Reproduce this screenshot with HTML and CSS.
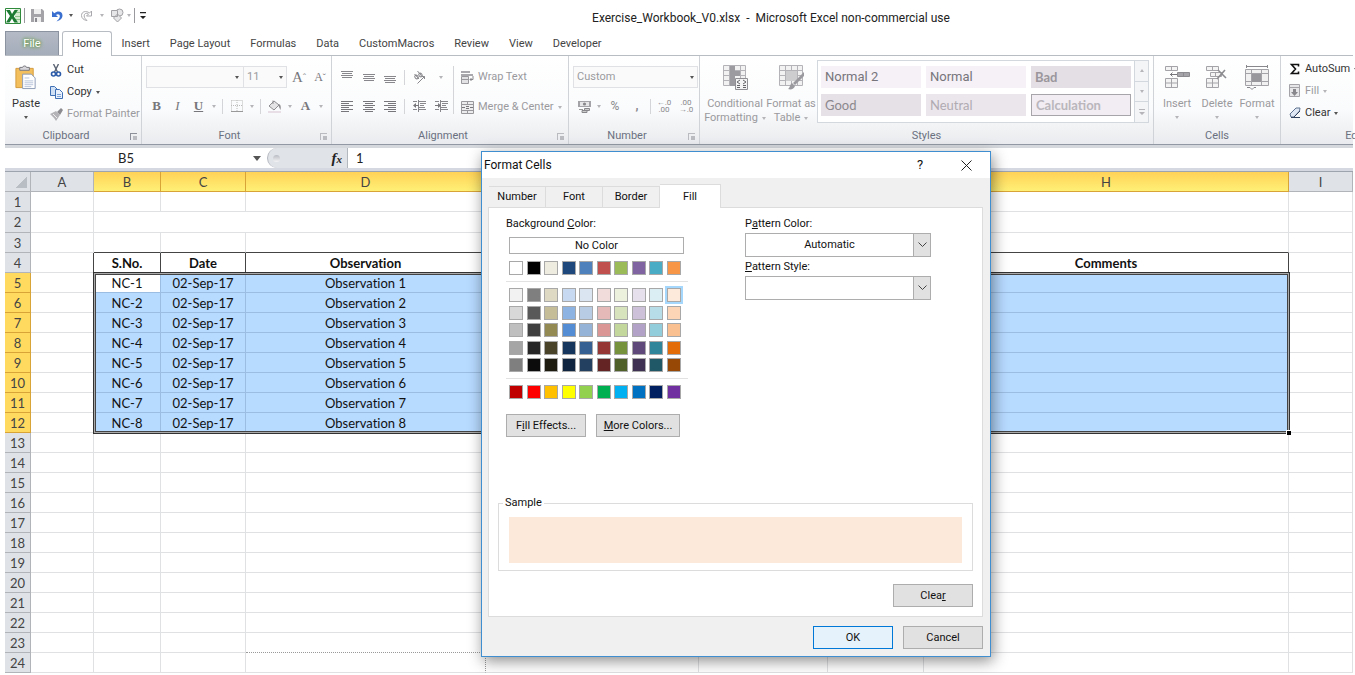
FILE: index.html
```html
<!DOCTYPE html>
<html lang="en">
<head>
  <meta charset="UTF-8">
  <meta name="viewport" content="width=device-width, initial-scale=1.0">
  <title>Exercise_Workbook_V0.xlsx - Microsoft Excel</title>
  <link rel="stylesheet" href="styles.css">
</head>
<body>
  <div class="app">
    <header class="titlebar">
      <div class="quick-access">
        <svg class="logo" width="16" height="18" viewBox="0 0 16 18"><path fill="#fff" stroke="#2f8a3c" d="M.5 1.500h15v15H.5z"/><path fill="#d5ecd3" d="M10 2h5v14h-5z"/><path stroke="#8cc48c" d="M10 5.500h5M10 9.500h5M10 12.500h5"/><path fill="#1d7a33" d="M1 3h4l2 4 2.500-4H13L8.800 9.200 13 15.500H9.200L7 11.500 4.500 15.500H1L5 9z"/></svg>
        <span class="sep"></span>
        <button class="tool save" aria-label="Save"><svg width="13" height="13" viewBox="0 0 13 13"><path fill="#a4a4a8" d="M0 0h11l2 2v11H0z"/><path fill="#eee" d="M3 0h7v5H3zM3 8h7v5H3z"/><path fill="#8a8a90" d="M4 9h2v4H4z"/></svg></button>
        <button class="tool" aria-label="Undo"><svg width="11" height="13" viewBox="0 0 11 13"><path fill="#3a6fd0" d="M0 2v6h6L4 6c2-1.500 4-.5 3.800 1.500C7.700 9.500 6 11 4.500 12.500 8 11.500 10.500 9.500 10.500 6.500 10.500 2.500 6 1.300 2.300 4.200z"/></svg></button>
        <i class="caret dark"></i>
        <button class="tool redo" aria-label="Redo"><svg width="11" height="13" viewBox="0 0 11 13"><path fill="none" stroke="#a9a9ad" d="M10.500 2v5h-5l2-2C5.500 3.500 3 4.500 3.200 7c.1 2 1.300 3 2.800 4.500C2.500 11 .5 9 .5 6.500.5 2.500 5 1.300 8.500 4z"/></svg></button>
        <i class="caret"></i>
        <button class="tool shapes" aria-label="Shapes"><svg width="14" height="15" viewBox="0 0 14 15"><g fill="#e6e6e8" stroke="#a2a2a6"><circle cx="9.500" cy="4.500" r="3.500"/><path d="M1.500 2.500h6v6h-6zM7.500 6l4 4-4 4-4-4z"/></g></svg></button>
        <i class="caret"></i>
        <span class="sep"></span>
        <button class="tool more" aria-label="Customize"><svg width="6" height="8" viewBox="0 0 6 8"><path fill="#222" d="M0 0h6v1.200H0zM0 4h6L3 7z"/></svg></button>
      </div>
      <h1>Exercise_Workbook_V0.xlsx&nbsp; -&nbsp; Microsoft Excel non-commercial use</h1>
    </header>

    <nav class="tabs">
      <button class="file">File</button>
      <button class="current">Home</button>
      <button>Insert</button>
      <button>Page Layout</button>
      <button>Formulas</button>
      <button>Data</button>
      <button>CustomMacros</button>
      <button>Review</button>
      <button>View</button>
      <button>Developer</button>
    </nav>

    <div class="ribbon">
      <section class="group clipboard">
        <div class="tools">
          <button class="big live">
            <svg width="22" height="26" viewBox="0 0 22 26"><path fill="#f3bf5c" stroke="#d39a3c" d="M.5 3.500h18v20H.5z"/><path fill="#d8d8dc" stroke="#77777d" d="M4.500 2.500h3c0-2 4-2 4 0h3v3h-10z"/><path fill="#fff" stroke="#8b9bb5" d="M7.500 9.500h9l4 4v11h-13z"/><path stroke="#b6c4d8" d="M9.500 13.500h5M9.500 16.500h9M9.500 18.500h9M9.500 20.500h9M9.500 22.500h7"/></svg>
            <span>Paste</span><i class="caret dark"></i>
          </button>
          <div class="small-list">
            <button class="small live"><svg width="13" height="13" viewBox="0 0 13 13"><path fill="none" stroke="#5b6473" stroke-width="1.400" d="M3.500 0l4 8M8.500 0l-4 8"/><g fill="none" stroke="#2b5ba8" stroke-width="1.600"><circle cx="3.500" cy="10" r="2"/><circle cx="8.500" cy="10" r="2"/></g></svg>Cut</button>
            <button class="small live"><svg width="13" height="13" viewBox="0 0 13 13"><path fill="#cfe0f5" stroke="#3f6fb5" d="M.5.5h4l3 3v6h-7z"/><path fill="#e8f1fc" stroke="#3f6fb5" d="M5.500 3.500h4l3 3v6h-7z"/><path stroke="#7ea4d8" d="M7 8.500h4M7 10.500h4"/></svg>Copy<i class="caret dark"></i></button>
            <button class="small"><svg width="13" height="13" viewBox="0 0 13 13"><path fill="#8c8c90" d="M7 4l4-4 2 2-3 5z"/><path fill="#b4b4b8" d="M0 6l6-3 4 4-4 6-2-3z"/><path stroke="#eee" d="M3 6l4 4"/></svg>Format Painter</button>
          </div>
        </div>
        <h2>Clipboard<span class="launch live"></span></h2>
      </section>

      <section class="group font">
        <div class="tools column">
          <div class="line">
            <span class="drop"><select class="family" aria-label="Font"><option></option></select><i class="caret dark"></i></span>
            <span class="drop"><select class="size" aria-label="Font size"><option>11</option></select><i class="caret dark"></i></span>
            <button class="tool serif grow" aria-label="Grow font">A<sup>&#710;</sup></button>
            <button class="tool serif shrink" aria-label="Shrink font">A<sup>&#711;</sup></button>
          </div>
          <div class="line letters">
            <button class="tool serif bold">B</button>
            <button class="tool serif italic">I</button>
            <button class="tool serif under">U</button><i class="caret"></i>
            <span class="sep"></span>
            <button class="tool" aria-label="Borders"><svg width="12" height="12" viewBox="0 0 12 12"><path fill="none" stroke="#bbb" stroke-dasharray="1 1" d="M.5.5h11v11M.5.5v11M6 0v11M0 5.500h12"/><path stroke="#999" d="M0 11.500h12"/></svg></button><i class="caret"></i>
            <span class="sep"></span>
            <button class="tool" aria-label="Fill color"><svg width="14" height="13" viewBox="0 0 14 13"><path fill="#e4e4e6" stroke="#8e8e92" d="M1 6l5-5 5 4-5 5z"/><path fill="none" stroke="#8e8e92" d="M5 4V.5"/><path fill="#8e8e92" d="M10 4c3 0 3 3 2.500 6L11 7z"/><path fill="#e8dfe6" d="M0 11h13v2H0z"/></svg></button><i class="caret"></i>
            <button class="tool serif color">A</button><i class="caret"></i>
          </div>
        </div>
        <h2>Font<span class="launch"></span></h2>
      </section>

      <section class="group alignment">
        <div class="tools">
          <div class="align-grid">
            <button class="tool" aria-label="Top align"><svg width="12" height="12" viewBox="0 0 12 12"><path stroke="#88888c" d="M0 .5h12M1 2.500h10M0 4.500h12M1 6.500h10"/></svg></button>
            <button class="tool" aria-label="Middle align"><svg width="12" height="12" viewBox="0 0 12 12"><path stroke="#88888c" d="M0 3.500h12M1 5.500h10M0 7.500h12M1 9.500h10"/></svg></button>
            <button class="tool" aria-label="Bottom align"><svg width="12" height="12" viewBox="0 0 12 12"><path stroke="#88888c" d="M0 5.500h12M1 7.500h10M0 9.500h12M1 11.500h10"/></svg></button>
            <span class="sep"></span>
            <button class="tool" aria-label="Orientation"><svg width="13" height="13" viewBox="0 0 13 13"><g fill="none" stroke="#88888c"><ellipse cx="3.500" cy="6" rx="2" ry="1.500" transform="rotate(45 3.500 6)"/><ellipse cx="7.500" cy="4" rx="2" ry="1.500" transform="rotate(45 7.500 4)"/><path d="M1.500 3l4.500 5M4.500 0l4.500 5.500M4.500 12.500l7-7M9 5.500h2.500V8"/></g></svg></button>
            <i class="caret"></i>
            <button class="tool" aria-label="Align left"><svg width="12" height="12" viewBox="0 0 12 12"><path stroke="#77777b" d="M0 1.500h12M0 3.500h8M0 5.500h12M0 7.500h8M0 9.500h12M0 11.500h8"/></svg></button>
            <button class="tool" aria-label="Center"><svg width="12" height="12" viewBox="0 0 12 12"><path stroke="#77777b" d="M0 1.500h12M2 3.500h8M0 5.500h12M2 7.500h8M0 9.500h12M2 11.500h8"/></svg></button>
            <button class="tool" aria-label="Align right"><svg width="12" height="12" viewBox="0 0 12 12"><path stroke="#77777b" d="M0 1.500h12M4 3.500h8M0 5.500h12M4 7.500h8M0 9.500h12M4 11.500h8"/></svg></button>
            <span class="sep"></span>
            <button class="tool" aria-label="Decrease indent"><svg width="13" height="12" viewBox="0 0 13 12"><path stroke="#88888c" d="M0 1.500h4M6 1.500h7M7 3.500h6M7 5.500h4M0 9.500h4M6 7.500h6M6 9.500h7M5.500 0v12"/><path fill="#77777b" d="M0 5.500L3 3v2h3v1H3v2z"/></svg></button>
            <button class="tool" aria-label="Increase indent"><svg width="13" height="12" viewBox="0 0 13 12"><path stroke="#88888c" d="M0 1.500h4M6 1.500h7M7 3.500h6M7 5.500h4M0 9.500h4M6 7.500h6M6 9.500h7M5.500 0v12"/><path fill="#77777b" d="M6 5.500L3 3v2H0v1h3v2z"/></svg></button>
          </div>
          <span class="sep tall"></span>
          <div class="small-list two">
            <button class="small"><svg width="13" height="13" viewBox="0 0 13 13"><path fill="#a9a9ad" d="M0 0h9v2H0zM0 3h12v2H0z"/><path fill="#e2e2e4" stroke="#99999d" d="M.5 5.500h7v7h-7zM.5 8.500h7"/><path fill="none" stroke="#88888c" d="M12 5v3.500H9M10.500 7L9 8.500l1.500 1.500"/></svg>Wrap Text</button>
            <button class="small"><svg width="13" height="13" viewBox="0 0 13 13"><path fill="#ececee" stroke="#99999d" d="M.5.5h12v12H.5zM6.500.5v3M6.500 9.500v3M.5 3.500h12M.5 9.500h12"/><path stroke="#77777b" d="M1 6.500h3M9 6.500h3M5 5.500h3M5 7.500h3"/></svg>Merge &amp; Center<i class="caret"></i></button>
          </div>
        </div>
        <h2>Alignment<span class="launch"></span></h2>
      </section>

      <section class="group number">
        <div class="tools column">
          <div class="line">
            <span class="drop wide"><select aria-label="Number format"><option>Custom</option></select><i class="caret dark"></i></span>
          </div>
          <div class="line formats">
            <button class="tool money" aria-label="Accounting format"><svg width="13" height="13" viewBox="0 0 13 13"><path fill="#a4a4a8" d="M0 1h13v6H0z"/><path fill="#e6e6e8" d="M2 2h9v4H2z"/><circle cx="6.500" cy="4" r="1.600" fill="#88888c"/><path fill="#ccc" stroke="#88888c" d="M6.500 8.500h5v2h-5zM4 10.500h5v2H4z"/><path stroke="#999" d="M1 9.500h4"/></svg></button><i class="caret"></i>
            <button class="tool">%</button>
            <button class="tool comma">,</button>
            <span class="sep"></span>
            <button class="tool decimals" aria-label="Increase decimal"><span>&larr;.0</span><span>.00</span></button>
            <button class="tool decimals" aria-label="Decrease decimal"><span>.00</span><span>&rarr;.0</span></button>
          </div>
        </div>
        <h2>Number<span class="launch"></span></h2>
      </section>

      <section class="group styles">
        <div class="tools">
          <button class="big cond">
            <svg width="25" height="25" viewBox="0 0 25 25"><path fill="#f2f2f3" stroke="#b4b4b8" d="M.5.5h22v20H.5zM.5 5.500h22M.5 10.500h22M.5 15.500h22M6.500.5v20M17.500.5v20"/><path fill="#9c9ca0" d="M7 1h5v20H7zM12 6h5v5h-5z"/><path fill="#f4f4f5" stroke="#909094" d="M12.500 13.500h12v11h-12z"/><path fill="none" stroke="#66666a" d="M17 15l-3 2 3 2M14 20.500h3M14 22.500h3M20 15l3 2-3 2M20 20.500h3M20 22.500h3"/></svg>
            <span>Conditional<br>Formatting<i class="caret"></i></span>
          </button>
          <button class="big astable">
            <svg width="25" height="25" viewBox="0 0 25 25"><path fill="#f2f2f3" stroke="#b4b4b8" d="M.5.5h23v20H.5zM.5 5.500h23M.5 10.500h23M.5 15.500h23M6.500.5v20M12.500.5v20M18.500.5v20"/><path fill="#cdcdd0" d="M7 6h11v10H7z"/><path fill="#9a9a9e" d="M23 9l2-2v4l-9 9-2-2zM13 18l3 3c-1 3-4 4-7 3 2-1 2-5 4-6z"/></svg>
            <span>Format as<br>Table<i class="caret"></i></span>
          </button>
          <div class="gallery">
            <div class="cells">
              <button>Normal 2</button>
              <button>Normal</button>
              <button class="bad">Bad</button>
              <button class="good">Good</button>
              <button class="neutral">Neutral</button>
              <button class="calculation">Calculation</button>
            </div>
            <div class="scroll">
              <button aria-label="Up"><i class="caret up"></i></button>
              <button aria-label="Down"><i class="caret"></i></button>
              <button aria-label="More"><svg width="6" height="6" viewBox="0 0 6 6"><path fill="#b5b5b9" d="M0 0h6v1H0zM0 3h6L3 6z"/></svg></button>
            </div>
          </div>
        </div>
        <h2>Styles</h2>
      </section>

      <section class="group cells-group">
        <div class="tools">
          <button class="big"><svg width="25" height="25" viewBox="0 0 25 25"><path fill="#f4f4f5" stroke="#a4a4a8" d="M.5 1.500h12v4H.5zM6.500 1.500v4M.5 13.500h12v9H.5zM6.500 13.500v9M.5 18h12"/><path fill="#a4a4a8" stroke="#8c8c90" d="M12.500 7.500h12v4h-12zM18.500 7.500v4"/><path fill="none" stroke="#77777b" d="M12 9.500H5M7.500 7.500l-2 2 2 2"/></svg><span>Insert</span><i class="caret"></i></button>
          <button class="big"><svg width="22" height="25" viewBox="0 0 22 25"><path fill="#f4f4f5" stroke="#a4a4a8" d="M.5 1.500h12v4H.5zM6.500 1.500v4M4.500 7.500h11v4h-11zM9.500 7.500v4M.5 13.500h12v9H.5zM6.500 13.500v9M.5 18h12"/><path stroke="#8c8c90" stroke-width="1.600" d="M12 5l8 8M19 5l-8 9"/></svg><span>Delete</span><i class="caret"></i></button>
          <button class="big"><svg width="25" height="25" viewBox="0 0 25 25"><path fill="#f1f1f2" stroke="#a4a4a8" d="M.5 4.500h23v16H.5zM.5 8.500h23M.5 16.500h23M6.500 4.500v16M16.500 4.500v16"/><path fill="#98989c" d="M7 9h9v8H7z"/><path fill="none" stroke="#88888c" d="M1 1.500h22M1.500 0v3M22.500 0v3M2 22.500h3l2 2 2-2h2"/></svg><span>Format</span><i class="caret"></i></button>
        </div>
        <h2>Cells</h2>
      </section>

      <section class="group editing">
        <div class="tools">
          <div class="small-list">
            <button class="small live"><svg width="12" height="12" viewBox="0 0 12 12"><path fill="none" stroke="#111" stroke-width="1.600" d="M9.500 3.500V1.500H2.500L6.500 6l-4 4.500h7v-2"/></svg>AutoSum<i class="caret dark"></i></button>
            <button class="small"><svg width="12" height="14" viewBox="0 0 12 14"><path fill="#e6e6e8" stroke="#a4a4a8" d="M.5.5h10v12H.5zM.5 3.500h10"/><path fill="#88888c" d="M4 5h3v3h2l-3.500 4L2 8h2z"/></svg>Fill<i class="caret"></i></button>
            <button class="small live"><svg width="12" height="12" viewBox="0 0 12 12"><path fill="#dfe8f4" stroke="#5f7290" d="M1 7l6-6h4L10.500 4 5 10H2z"/><path stroke="#31435f" d="M2 10.500h9M5 10l6-6"/></svg>Clear<i class="caret dark"></i></button>
          </div>
        </div>
        <h2>Editing</h2>
      </section>
    </div>

    <div class="formula-bar">
      <input class="name-box" aria-label="Name box" value="B5">
      <i class="caret dark"></i>
      <div class="capsule"><span class="knob"></span><span class="fx">f<small>x</small></span></div>
      <input class="formula" aria-label="Formula" value="1">
    </div>

    <main class="sheet">
      <table>
        <colgroup>
          <col class="col-head"><col class="col-a"><col class="col-b"><col class="col-c"><col class="col-d"><col class="col-e"><col class="col-f"><col class="col-g"><col class="col-h"><col class="col-i">
        </colgroup>
        <thead>
          <tr>
            <th class="corner"></th><th>A</th><th class="on">B</th><th class="on">C</th><th class="on">D</th><th class="on">E</th><th class="on">F</th><th class="on">G</th><th class="on">H</th><th>I</th>
          </tr>
        </thead>
        <tbody id="rows"></tbody>
      </table>
      <div class="selection"></div>

      <div class="dialog" role="dialog" aria-labelledby="dialog-title">
        <div class="dialog-title">
          <h2 id="dialog-title">Format Cells</h2>
          <button aria-label="Help">?</button>
          <button aria-label="Close"><svg width="11" height="11" viewBox="0 0 11 11"><path stroke="#222" d="M.5.5l10 10M10.500.5l-10 10"/></svg></button>
        </div>
        <div class="dialog-tabs">
          <button>Number</button>
          <button>Font</button>
          <button>Border</button>
          <button class="current">Fill</button>
        </div>
        <div class="panel">
          <div class="columns">
            <div class="background">
              <p class="label">Background <u>C</u>olor:</p>
              <button class="no-color">No Color</button>
              <div class="swatches" data-palette="theme"></div>
              <hr>
              <div class="swatches shades" data-palette="shades"></div>
              <hr>
              <div class="swatches" data-palette="standard"></div>
              <div class="buttons">
                <button class="btn">F<u>i</u>ll Effects...</button>
                <button class="btn"><u>M</u>ore Colors...</button>
              </div>
            </div>
            <div class="pattern">
              <label class="label" for="pattern-color">P<u>a</u>ttern Color:</label>
              <div class="combo">
                <select id="pattern-color"><option>Automatic</option></select>
                <span><svg width="9" height="6" viewBox="0 0 9 6"><path fill="none" stroke="#444" d="M.5.5l4 4 4-4"/></svg></span>
              </div>
              <label class="label" for="pattern-style"><u>P</u>attern Style:</label>
              <div class="combo">
                <select id="pattern-style"><option></option></select>
                <span><svg width="9" height="6" viewBox="0 0 9 6"><path fill="none" stroke="#444" d="M.5.5l4 4 4-4"/></svg></span>
              </div>
            </div>
          </div>
          <fieldset class="sample">
            <legend>Sample</legend>
            <div class="preview"></div>
          </fieldset>
          <button class="btn clear">Clea<u>r</u></button>
        </div>
        <div class="actions">
          <button class="btn primary">OK</button>
          <button class="btn">Cancel</button>
        </div>
      </div>
    </main>
  </div>
  <script src="script.js"></script>
</body>
</html>
```
FILE: styles.css
```css
* {
  box-sizing: border-box;
}

body {
  margin: 0;
  background: #fff;
  font-family: Roboto, "Noto Sans", sans-serif;
  font-size: 11px;
  line-height: 14px;
  color: #444;
}

button,
input,
select {
  margin: 0;
  padding: 0;
  border: none;
  background: none;
  font: inherit;
  color: inherit;
}

h1,
h2,
p {
  margin: 0;
  font-size: inherit;
  font-weight: normal;
}

svg {
  display: block;
  flex: none;
}

.app {
  padding: 0 2px 0 5px;
  overflow: hidden;
}

.caret {
  flex: none;
  width: 0;
  border: 2px solid transparent;
  border-top: 3px solid #b5b5b9;
  border-bottom: none;
}

.caret.dark {
  border-top-color: #555;
}

.caret.up {
  border-top: none;
  border-bottom: 3px solid #b5b5b9;
}

.sep {
  width: 1px;
  height: 15px;
  background: #d3d5d9;
}

.tool {
  display: flex;
  align-items: center;
  justify-content: center;
  color: #88888c;
}

/* title bar */
.titlebar {
  display: flex;
  align-items: center;
  height: 31px;
}

.quick-access {
  display: flex;
  align-items: center;
  width: 148px;
  height: 31px;
}

.quick-access .sep {
  margin-left: 3px;
  background: #9a9a9e;
}

.quick-access .save {
  margin: 0 3px 0 6px;
}

.quick-access .save + .tool {
  margin: 0 6px 0 5px;
}

.quick-access .redo {
  margin: 0 8px;
}

.quick-access .shapes {
  margin: 0 3px 0 6px;
}

.quick-access .more {
  margin-left: 5px;
}

.titlebar h1 {
  flex: 1;
  padding: 5px 0 0 36px;
  text-align: center;
  font-size: 12px;
  line-height: 16px;
  color: #222;
}

/* ribbon tabs */
.tabs {
  display: flex;
  height: 25px;
  border-bottom: 1px solid #b8bcc3;
}

.tabs button {
  height: 25px;
  padding: 0 10px;
}

.tabs .file {
  width: 54px;
  height: 24px;
  margin-right: 3px;
  border: 1px solid #8b93a1;
  border-bottom: none;
  background: linear-gradient(#b4bac6, #a5adba);
  color: #fff;
  text-shadow: 0 0 3px #4f8a2c, 0 0 4px #6fae3e;
}

.tabs .current {
  padding: 0 9px;
  border: 1px solid #b8bcc3;
  border-bottom: none;
  border-radius: 3px 3px 0 0;
  background: #fff;
}

/* ribbon */
.ribbon {
  display: flex;
  height: 89px;
  border-bottom: 1px solid #9299a4;
  background: linear-gradient(#fff, #fafbfc 60%, #e9ebee);
}

.group {
  display: flex;
  flex: none;
  flex-direction: column;
  border-right: 1px solid #d0d3d8;
  white-space: nowrap;
}

.group h2 {
  position: relative;
  height: 17px;
  padding-right: 14px;
  line-height: 18px;
  text-align: center;
  color: #6b7080;
}

.launch {
  position: absolute;
  right: 4px;
  bottom: 4px;
  width: 7px;
  height: 7px;
  border: 1px solid #b9bbc0;
  border-right: none;
  border-bottom: none;
  background: linear-gradient(#b9bbc0, #b9bbc0) right bottom / 4px 4px no-repeat;
}

.launch.live {
  border-color: #8d9098;
}

.tools {
  display: flex;
  flex: 1;
  color: #9a9a9e;
}

.tools .live {
  color: #333;
}

.tools.column {
  flex-direction: column;
  gap: 7px;
  padding-top: 10px;
}

.line {
  display: flex;
  align-items: center;
  height: 22px;
}

.clipboard {
  width: 137px;
}

.font {
  width: 190px;
}

.alignment {
  width: 237px;
}

.number {
  width: 131px;
}

.styles {
  width: 454px;
}

.styles h2,
.cells-group h2 {
  padding-right: 0;
}

.cells-group {
  width: 127px;
}

.editing {
  flex: 1 1 0;
  min-width: 0;
  border-right: none;
}

.editing h2 {
  min-width: 162px;
  padding-right: 0;
}

.big {
  display: flex;
  flex-direction: column;
  align-items: center;
  width: 40px;
  padding-top: 9px;
  line-height: 14px;
}

.big svg {
  height: 25px;
  margin-bottom: 7px;
}

.big span .caret {
  display: inline-block;
  margin-left: 4px;
  vertical-align: middle;
}

.big > .caret {
  margin-top: 5px;
}

.clipboard .tools {
  padding-left: 1px;
}

.small-list {
  display: flex;
  flex-direction: column;
  gap: 8px;
  padding-top: 7px;
}

.clipboard .small-list {
  margin-left: 4px;
}

.small-list.two {
  gap: 16px;
  padding: 14px 0 0 7px;
}

.small {
  display: flex;
  align-items: center;
  gap: 4px;
  height: 14px;
}

.drop {
  position: relative;
}

.drop select {
  appearance: none;
  width: 44px;
  height: 22px;
  padding-left: 3px;
  border: 1px solid #dfe1e5;
  background: #fafafb;
  color: #9a9a9e;
}

.drop .family {
  width: 97px;
  border-right: none;
}

.drop.wide select {
  width: 125px;
}

.drop .caret {
  position: absolute;
  top: 10px;
  right: 4px;
}

.font .line {
  padding-left: 4px;
}

.serif {
  font-family: "Liberation Serif", serif;
  font-size: 13px;
  color: #77777b;
}

.serif sup {
  font-size: 9px;
  line-height: 6px;
}

.grow {
  width: 24px;
  font-size: 15px;
}

.shrink {
  width: 18px;
  font-size: 12px;
}

.letters .tool {
  width: 21px;
}

.letters .color {
  font-weight: bold;
}

.letters .caret,
.letters .sep {
  margin: 0 3px;
}

.bold {
  font-weight: bold;
}

.italic {
  font-style: italic;
}

.under {
  text-decoration: underline;
  font-weight: bold;
}

.align-grid {
  display: grid;
  grid-template-columns: 22px 21px 22px 7px 22px 22px;
  grid-template-rows: 22px 22px;
  row-gap: 7px;
  align-items: center;
  justify-items: center;
  padding: 10px 0 0 4px;
}

.sep.tall {
  height: 48px;
  margin: 10px 0 0 1px;
}

.number .line {
  padding-left: 4px;
}

.formats .tool {
  width: 22px;
  font-size: 12px;
}

.formats .caret {
  margin: 0 3px 0 2px;
}

.formats .comma {
  font-weight: bold;
}

.formats .sep {
  margin: 0 2px;
}

.formats .decimals {
  flex-direction: column;
  font-size: 8px;
  line-height: 7px;
}

.cond {
  width: 62px;
  margin-left: 4px;
}

.astable {
  width: 50px;
}

.gallery {
  display: flex;
  flex: none;
  height: 63px;
  margin: 4px 0 0 1px;
  border: 1px solid #d3d7de;
  background: #fff;
}

.cells {
  display: grid;
  grid-template-columns: repeat(3, 100px);
  gap: 5px;
  padding: 5px 3px;
}

.cells button {
  height: 22px;
  padding-left: 4px;
  background: #f5f1f7;
  text-align: left;
  font-size: 13px;
  color: #77757b;
}

.cells .bad {
  background: #e4dfe4;
  font-family: Lato, sans-serif;
  font-weight: bold;
  color: #9a969c;
}

.cells .good {
  background: #e6e1e6;
  font-family: Lato, sans-serif;
  color: #8c888e;
}

.cells .neutral {
  background: #ebe6ec;
  font-family: Lato, sans-serif;
  color: #b0abb2;
}

.cells .calculation {
  border: 1px solid #a8a5aa;
  background: #f1edf3;
  font-family: Lato, sans-serif;
  font-weight: bold;
  color: #bab6bc;
}

.scroll {
  display: flex;
  flex-direction: column;
  width: 14px;
}

.scroll button {
  display: flex;
  flex: 1;
  align-items: center;
  justify-content: center;
  border-left: 1px solid #d3d7de;
  border-bottom: 1px solid #d3d7de;
  background: #f4f5f7;
}

.scroll button:last-child {
  border-bottom: none;
}

.cells-group .tools {
  padding-left: 3px;
}

.editing .small-list {
  padding: 6px 0 0 8px;
}

/* formula bar */
.formula-bar {
  display: flex;
  align-items: center;
  height: 26px;
  border-top: 3px solid #d5d8dd;
  border-bottom: 3px solid #d5d8e0;
  background: #fff;
  font-family: Lato, sans-serif;
  font-size: 13px;
  color: #222;
}

.name-box {
  width: 242px;
  text-align: center;
}

.formula-bar > .caret {
  margin: 0 6px;
  border-width: 4px;
  border-top-width: 5px;
  border-bottom: none;
}

.capsule {
  display: flex;
  align-items: center;
  justify-content: space-between;
  width: 81px;
  height: 20px;
  padding: 0 5px;
  border: 1px solid #b3b7be;
  border-width: 0 1px;
  border-radius: 10px 0 0 10px;
  background: #e0e3e8;
}

.knob {
  width: 7px;
  height: 7px;
  border-radius: 50%;
  background: linear-gradient(#b8bbc2, #f4f4f6);
}

.fx {
  font-family: "Liberation Serif", serif;
  font-size: 15px;
  font-style: italic;
  font-weight: bold;
}

.fx small {
  font-size: 11px;
}

.formula {
  flex: 1;
  min-width: 0;
  padding-left: 8px;
}

/* worksheet */
.sheet {
  position: relative;
}

.sheet table {
  width: 100%;
  table-layout: fixed;
  border-collapse: separate;
  border-spacing: 0;
  border-top: 1px solid #9ea4ae;
  font-family: Lato, sans-serif;
  font-size: 13px;
  font-variant-ligatures: none;
  line-height: 18px;
  color: #111;
}

.col-head { width: 26px; }
.col-a { width: 63px; }
.col-b { width: 67px; }
.col-c { width: 85px; }
.col-d { width: 240px; }
.col-e { width: 213px; }
.col-f { width: 129px; }
.col-g { width: 96px; }
.col-i { width: 64px; }

.sheet th,
.sheet td {
  height: 20px;
  padding: 0;
  border-right: 1px solid #dfe1e3;
  border-bottom: 1px solid #dfe1e3;
  text-align: center;
  white-space: nowrap;
}

.sheet th {
  background: #dfe3e8;
  border-color: #b1b5ba;
  font-weight: normal;
  color: #444;
}

.sheet th.on {
  background: #ffda5f;
  border-color: #d8a438;
}

.sheet thead th.on {
  background: linear-gradient(#ffd257, #fff076);
}

.sheet .corner {
  background: linear-gradient(135deg, transparent 50%, #b9bdc4 50%) 10px 4px / 12px 12px no-repeat #dfe3e8;
}

.sheet .tall-row td,
.sheet .tall-row th {
  height: 21px;
}

.sheet .before-head td:nth-child(n+3):nth-child(-n+9) {
  border-bottom-color: #444;
}

.sheet .head td {
  font-weight: bold;
}

.sheet .head td:nth-child(n+2):nth-child(-n+9) {
  border-right-color: #444;
}

.sheet .data td:nth-child(n+3):nth-child(-n+9) {
  background-color: #b7daff;
  border-right: 1px solid #9cbde2;
  border-bottom: 1px solid #9cbde2;
}

.sheet .data td.active:nth-child(3) {
  background-color: #fff;
}

.sheet .note-top td:nth-child(5) {
  border-bottom: 1px dotted #999;
}

.sheet .note td:nth-child(5) {
  border-right: 1px dotted #999;
}

.selection {
  position: absolute;
  top: 101px;
  right: 63px;
  left: 88px;
  height: 162px;
  border: 1px solid #333;
  box-shadow: inset 0 0 0 1px #aaa, inset 0 0 0 2px #444;
}

.selection::after {
  content: "";
  position: absolute;
  right: -2px;
  bottom: -2px;
  width: 4px;
  height: 4px;
  border: 1px solid #fff;
  border-width: 1px 0 0 1px;
  background: #000;
}

/* format cells dialog */
.dialog {
  position: absolute;
  top: -20px;
  left: 476px;
  width: 510px;
  padding-bottom: 7px;
  border: 1px solid #3f8fd0;
  background: #f0f0f0;
  box-shadow: 2px 4px 14px rgba(0, 0, 0, 0.45);
  color: #111;
}

.dialog-title {
  display: flex;
  align-items: center;
  height: 26px;
  padding-left: 2px;
  background: #fff;
  font-size: 12px;
}

.dialog-title h2 {
  flex: 1;
}

.dialog-title button {
  display: flex;
  align-items: center;
  justify-content: center;
  width: 46px;
  height: 26px;
  font-size: 13px;
}

.dialog-title button:last-child {
  margin-right: 1px;
}

.dialog-tabs {
  display: flex;
  align-items: flex-end;
  height: 29px;
  padding-left: 7px;
}

.dialog-tabs button {
  width: 57px;
  height: 21px;
  border: 1px solid #dcdcdc;
  border-width: 1px 1px 0 0;
}

.dialog-tabs .current {
  position: relative;
  width: 61px;
  height: 24px;
  margin-bottom: -1px;
  background: #fff;
}

.panel {
  display: flex;
  flex-direction: column;
  margin: 0 7px 0 6px;
  padding: 9px;
  border: 1px solid #dcdcdc;
  background: #fff;
}

.columns {
  display: flex;
  height: 279px;
}

.background {
  width: 182px;
  margin: 0 57px 0 8px;
}

.label {
  display: block;
  height: 16px;
  line-height: 14px;
  white-space: nowrap;
}

.no-color {
  display: block;
  width: 175px;
  height: 17px;
  margin: 4px 0 7px 3px;
  border: 1px solid #adadad;
  background: #fff;
  line-height: 14px;
}

.swatches {
  display: grid;
  grid-template-columns: repeat(10, 14px);
  grid-auto-rows: 14px;
  justify-content: space-between;
  align-content: space-between;
  width: 172px;
  margin-left: 3px;
}

.shades {
  height: 84px;
}

.swatch {
  border: 1px solid #a8a8a8;
}

.swatch.selected {
  outline: 2px solid #a5d6fb;
}

.background hr {
  height: 1px;
  margin: 6px 0;
  border: none;
  background: #e2e2e2;
}

.buttons {
  display: flex;
  gap: 10px;
  margin-top: 15px;
}

.btn {
  flex: none;
  width: 80px;
  height: 23px;
  border: 1px solid #adadad;
  background: #e1e1e1;
  white-space: nowrap;
}

.buttons .btn + .btn {
  width: 84px;
}

.btn.primary {
  border: 1px solid #0078d7;
  background: #e5f1fb;
}

.pattern {
  width: 186px;
}

.combo {
  position: relative;
  margin-bottom: 3px;
}

.combo select {
  appearance: none;
  display: block;
  width: 100%;
  height: 24px;
  padding-right: 17px;
  border: 1px solid #adadad;
  background: #fff;
  text-align-last: center;
}

.combo span {
  position: absolute;
  top: 0;
  right: 0;
  display: flex;
  align-items: center;
  justify-content: center;
  width: 18px;
  height: 24px;
  border: 1px solid #adadad;
  background: #e1e1e1;
  pointer-events: none;
}

.sample {
  margin: 0;
  padding: 7px 10px;
  border: 1px solid #dcdcdc;
}

.sample legend {
  margin-left: -6px;
  padding: 0 2px;
}

.preview {
  height: 46px;
  background: #fde9d9;
}

.clear {
  align-self: flex-end;
  margin-top: 13px;
}

.actions {
  display: flex;
  justify-content: flex-end;
  gap: 10px;
  padding: 9px 7px 0 0;
}
```
FILE: script.js
```js
const palettes = {
  theme: ['#ffffff #000000 #eeece1 #1f497d #4f81bd #c0504d #9bbb59 #8064a2 #4bacc6 #f79646'],
  shades: [
    '#f2f2f2 #7f7f7f #ddd9c3 #c6d9f0 #dbe5f1 #f2dcdb #ebf1dd #e5e0ec #dbeef3 #fdeada',
    '#d8d8d8 #595959 #c4bd97 #8db3e2 #b8cce4 #e5b9b7 #d7e3bc #ccc1d9 #b7dde8 #fbd5b5',
    '#bfbfbf #3f3f3f #938953 #548dd4 #95b3d7 #d99694 #c3d69b #b2a2c7 #92cddc #fac08f',
    '#a5a5a5 #262626 #494429 #17365d #366092 #953734 #76923c #5f497a #31859b #e36c09',
    '#7f7f7f #0c0c0c #1d1b10 #0f243e #244061 #632423 #4f6128 #3f3151 #205867 #974806'
  ],
  standard: ['#c00000 #ff0000 #ffc000 #ffff00 #92d050 #00b050 #00b0f0 #0070c0 #002060 #7030a0']
};

document.querySelectorAll('.swatches').forEach((box) => {
  palettes[box.dataset.palette].join(' ').split(' ').forEach((color) => {
    const swatch = document.createElement('button');
    swatch.className = color === '#fdeada' ? 'swatch selected' : 'swatch';
    swatch.style.background = color;
    swatch.setAttribute('aria-label', color);
    box.appendChild(swatch);
  });
});

const rowClasses = { 2: 'tall-row', 3: 'before-head', 4: 'head', 23: 'note-top', 24: 'note' };
const body = document.getElementById('rows');

for (let n = 1; n <= 24; n++) {
  const isData = n >= 5 && n <= 12;
  const row = body.insertRow();
  row.className = isData ? 'data' : rowClasses[n] || '';

  const head = document.createElement('th');
  head.textContent = n;
  if (isData) head.className = 'on';
  row.appendChild(head);

  let cells = ['', '', '', '', '', '', '', '', ''];
  if (n === 4) cells = ['', 'S.No.', 'Date', 'Observation', '', '', '', 'Comments', ''];
  if (isData) cells = ['', 'NC-' + (n - 4), '02-Sep-17', 'Observation ' + (n - 4), '', '', '', '', ''];
  if (n === 2) cells = ['', '', ''];

  cells.forEach((text) => {
    row.insertCell().textContent = text;
  });
  if (n === 2) row.cells[2].colSpan = 7;
  if (n === 5) row.cells[2].className = 'active';
}
```
